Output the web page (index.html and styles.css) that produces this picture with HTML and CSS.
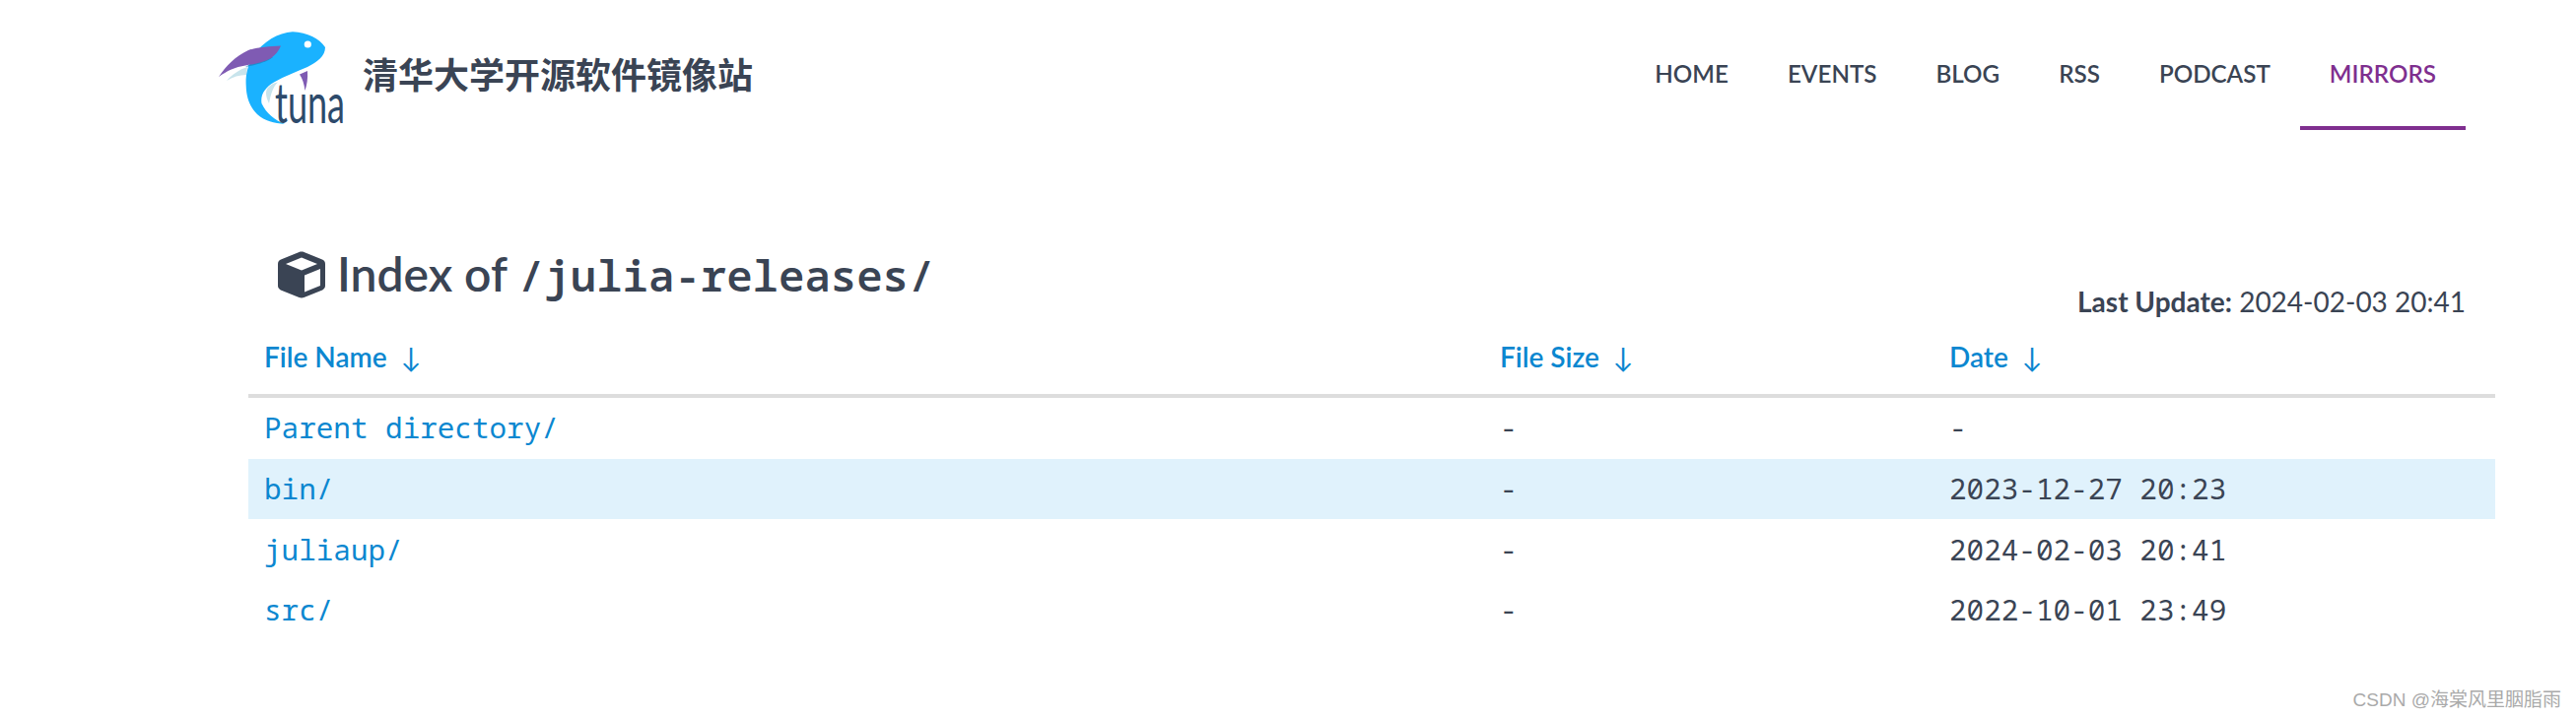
FILE: index.html
```html
<!DOCTYPE html>
<html lang="zh">
<head>
<meta charset="utf-8">
<title>Index of /julia-releases/</title>
<link rel="stylesheet" href="styles.css">
</head>
<body>
<header class="topbar">
  <a class="brand" href="#">
    <svg class="logo" viewBox="0 0 150 110" aria-label="tuna">
      <path class="fin-pale" d="M15 57C20 51 27 46 36 43L35 51C28 51 21 53 15 57Z"/>
      <path class="body" d="M115 23C109 14 97 8 82 7.300C67 8 52 18 43 30C36 41 34 52 34.700 62C35 75 39 84 46 91C54 98 63 100 74 101C64 97 55 90 50.500 80C49 71 54 64 63 58.500C74 52 86 48 97 43C107 38 115 32 115 23Z"/>
      <path class="fin-pale" d="M58 80C54 72 54 66 58 63C61 60 64 59 67 58.500C62 63 60 70 58 80Z"/>
      <circle class="eye" cx="97.300" cy="20" r="3.600"/>
      <path class="fin-shade" d="M34 43C45 41 56 38 62 33L50 34Z"/>
      <path class="fin" d="M7 53C14 42 24 32 37 26C46 23 58 22 70 21.500C68 27 64 31 60 34C53 38 44 40 34 41.500C24 43 15 47 7 53Z"/>
      <path class="fin" d="M89 50.500L97 47C97.500 55 96.500 61 94.500 67C93.500 60 92 55 89 50.500Z"/>
      <text class="tuna" x="64" y="99.500" textLength="71" lengthAdjust="spacingAndGlyphs">tuna</text>
    </svg>
    <span class="site-name">清华大学开源软件镜像站</span>
  </a>
  <nav class="nav">
    <a href="#">HOME</a>
    <a href="#">EVENTS</a>
    <a href="#">BLOG</a>
    <a href="#">RSS</a>
    <a href="#">PODCAST</a>
    <a class="active" href="#">MIRRORS</a>
  </nav>
</header>
<main class="content">
  <div class="title-row">
    <h1>
      <svg class="cube" viewBox="0 0 48 48" aria-hidden="true">
        <path class="cube-solid" d="M21.500 1L3 8.500C1 9.300 0 10.800 0 13V35C0 37 1 38.500 2.800 39.400L21.500 47C23 47.600 25 47.600 26.500 47L45.200 39.400C47 38.500 48 37 48 35V13C48 10.800 47 9.300 45 8.500L26.500 1C25 .4 23 .4 21.500 1Z"/>
        <path class="cube-face" d="M24 6.500L40 13L24 19.500L8 13Z"/>
        <path class="cube-face" d="M27 24.500L43 18V35L27 41.500Z"/>
      </svg>
      <span class="heading-text">Index of <code>/julia-releases/</code></span>
    </h1>
    <p class="update"><strong>Last Update:</strong> 2024-02-03 20:41</p>
  </div>
  <table class="listing">
    <colgroup><col class="c-name"><col class="c-size"><col class="c-date"></colgroup>
    <thead>
      <tr>
        <th><a href="#">File Name <span class="arrow">↓</span></a></th>
        <th><a href="#">File Size <span class="arrow">↓</span></a></th>
        <th><a href="#">Date <span class="arrow">↓</span></a></th>
      </tr>
    </thead>
    <tbody>
      <tr class="first"><td><a href="#">Parent directory/</a></td><td>-</td><td>-</td></tr>
      <tr class="hl"><td><a href="#">bin/</a></td><td>-</td><td>2023-12-27 20:23</td></tr>
      <tr><td><a href="#">juliaup/</a></td><td>-</td><td>2024-02-03 20:41</td></tr>
      <tr><td><a href="#">src/</a></td><td>-</td><td>2022-10-01 23:49</td></tr>
    </tbody>
  </table>
</main>
<div class="watermark">CSDN @海棠风里胭脂雨</div>
</body>
</html>
```
FILE: styles.css
```css
* { box-sizing: border-box; }
html, body { margin: 0; height: 100%; overflow: hidden; }
body {
  position: relative;
  background: #fff;
  color: #3a4454;
  font-family: Lato, "Noto Sans CJK SC", sans-serif;
}
a { color: inherit; text-decoration: none; }

.topbar {
  display: flex;
  justify-content: space-between;
  align-items: flex-start;
  height: 132px;
  padding: 0 112px 0 215px;
}
.brand { display: flex; align-items: center; padding-top: 25px; }
.logo { width: 150px; height: 110px; flex: none; overflow: visible; }
.site-name {
  margin-left: 3px;
  margin-top: -12px;
  font: 700 36px/1 "Noto Sans CJK SC", sans-serif;
  color: #3a4454;
}
.body { fill: #1ab2ff; }
.fin { fill: #7f5bb3; }
.fin-pale { fill: #c8e4ec; }
.fin-shade { fill: #1a8fd0; }
.eye { fill: #fff; }
.tuna { font: 400 56px Lato, sans-serif; fill: #2d4a6b; }

.nav { display: flex; height: 132px; }
.nav a {
  padding: 60px 30px 0;
  font-size: 24.200px;
  line-height: 30px;
  font-weight: 600;
  color: #3a4454;
  border-bottom: 4px solid transparent;
}
.nav a.active { color: #7f2f8f; border-bottom-color: #7f2f8f; }

.content { padding: 0 82px 0 252px; }
.title-row {
  display: flex;
  justify-content: space-between;
  align-items: flex-end;
  height: 192px;
  padding: 0 30px 0 30px;
}
h1 {
  display: flex;
  align-items: center;
  align-self: flex-start;
  margin: 116px 0 0;
  font-size: 48px;
  line-height: 60px;
  font-weight: 600;
  color: #3a4454;
}
.cube { width: 48px; height: 48px; margin-right: 12px; flex: none; }
.cube-solid { fill: #3a4454; }
.cube-face { fill: #fff; }
h1 code {
  font: 600 44px/60px "Noto Sans Mono", "DejaVu Sans Mono", monospace;
}
.update { margin: 0; font-size: 28px; line-height: 36px; color: #3a4454; }

.listing { width: 2280px; border-collapse: collapse; table-layout: fixed; }
.c-name { width: 1254px; }
.c-size { width: 456px; }
.c-date { width: 570px; }
.listing th {
  height: 78px;
  padding: 0 16px;
  border-bottom: 4px solid #ddd;
  text-align: left;
  font-size: 28px;
  font-weight: 600;
  color: #0b87d0;
}
.arrow { margin-left: 7px; font-weight: 400; }
.listing td {
  height: 61px;
  padding: 0 16px;
  font: 400 29.300px/36px "Noto Sans Mono", "DejaVu Sans Mono", monospace;
  color: #3a4454;
}
.listing .first td { height: 64px; padding-bottom: 2px; }
.listing .hl td { padding-bottom: 2px; }
.listing td a { color: #0b87d0; }
.hl { background: #e0f2fc; }

.watermark {
  position: absolute;
  right: 15px;
  bottom: 6px;
  font: 19px/24px "Liberation Sans", "Noto Sans CJK SC", sans-serif;
  color: #aaa;
}
```
